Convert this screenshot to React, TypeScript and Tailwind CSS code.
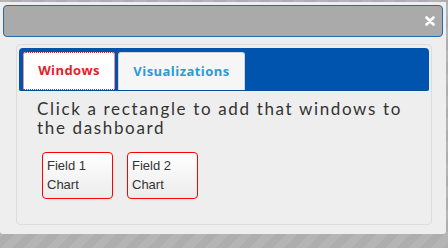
import React from "react";

export default function App() {
  return (
    <div className="w-[448px] h-[248px] overflow-hidden bg-[#b1b1b1] bg-[repeating-linear-gradient(135deg,#b5b5b5_0px,#b5b5b5_8px,#aeaeae_8px,#aeaeae_16px)] pt-[2px]">
      <div className="w-[446px] h-[232px] bg-[#eeeeee] rounded-b-[3px] px-[3px] pt-[3px]">
        <div className="h-[32px] bg-[#aaaaaa] border border-[#2a6aa6] rounded-[4px] flex items-center justify-end pr-[7px]">
          <svg width="10" height="10" viewBox="0 0 10 10">
            <path d="M1.5 1.5 L8.5 8.5 M8.5 1.5 L1.5 8.5" stroke="#ffffff" strokeWidth="2.6" strokeLinecap="round" />
          </svg>
        </div>
        <div className="mt-[7px] ml-[13px] w-[416px] h-[181px] border border-[#dcdcdc] rounded-[4px] px-[2px] pt-[3px]">
          <div className="h-[43px] bg-[#0054ad] rounded-t-[4px] rounded-b-[2px] border-b border-[#0a4f9c] flex items-end gap-[3px] pl-[4px]">
            <div className="w-[92px] h-[38px] bg-white rounded-t-[3px] outline outline-1 outline-dotted outline-[#e0202a] -outline-offset-1 flex items-center justify-center font-['Open_Sans',sans-serif] font-bold text-[13px] text-[#e5212b] tracking-[0.4px]">
              Windows
            </div>
            <div className="w-[127px] h-[38px] bg-[#f6f6f6] rounded-t-[3px] border border-[#d4d4d4] border-b-0 flex items-center justify-center font-['Open_Sans',sans-serif] font-bold text-[13px] text-[#2c9ad3] tracking-[0.45px]">
              Visualizations
            </div>
          </div>
          <div className="pl-[18px] pt-[8px]">
            <div className="font-['Lato',sans-serif] text-[17px] leading-[19px] text-[#333333] tracking-[1.65px] w-[392px]">
              Click a rectangle to add that windows to the dashboard
            </div>
            <div className="flex gap-[14px] mt-[15px] ml-[5px]">
              {["Field 1", "Field 2"].map((f) => (
                <div
                  key={f}
                  className="w-[71px] h-[47px] border border-[#ff0000] rounded-[4px] bg-gradient-to-b from-[#ffffff] to-[#ececec] pl-[4px] pt-[3px] font-['Liberation_Sans',sans-serif] text-[13px] leading-[19px] text-[#333333]"
                >
                  <div>{f}</div>
                  <div>Chart</div>
                </div>
              ))}
            </div>
          </div>
        </div>
      </div>
    </div>
  );
}
